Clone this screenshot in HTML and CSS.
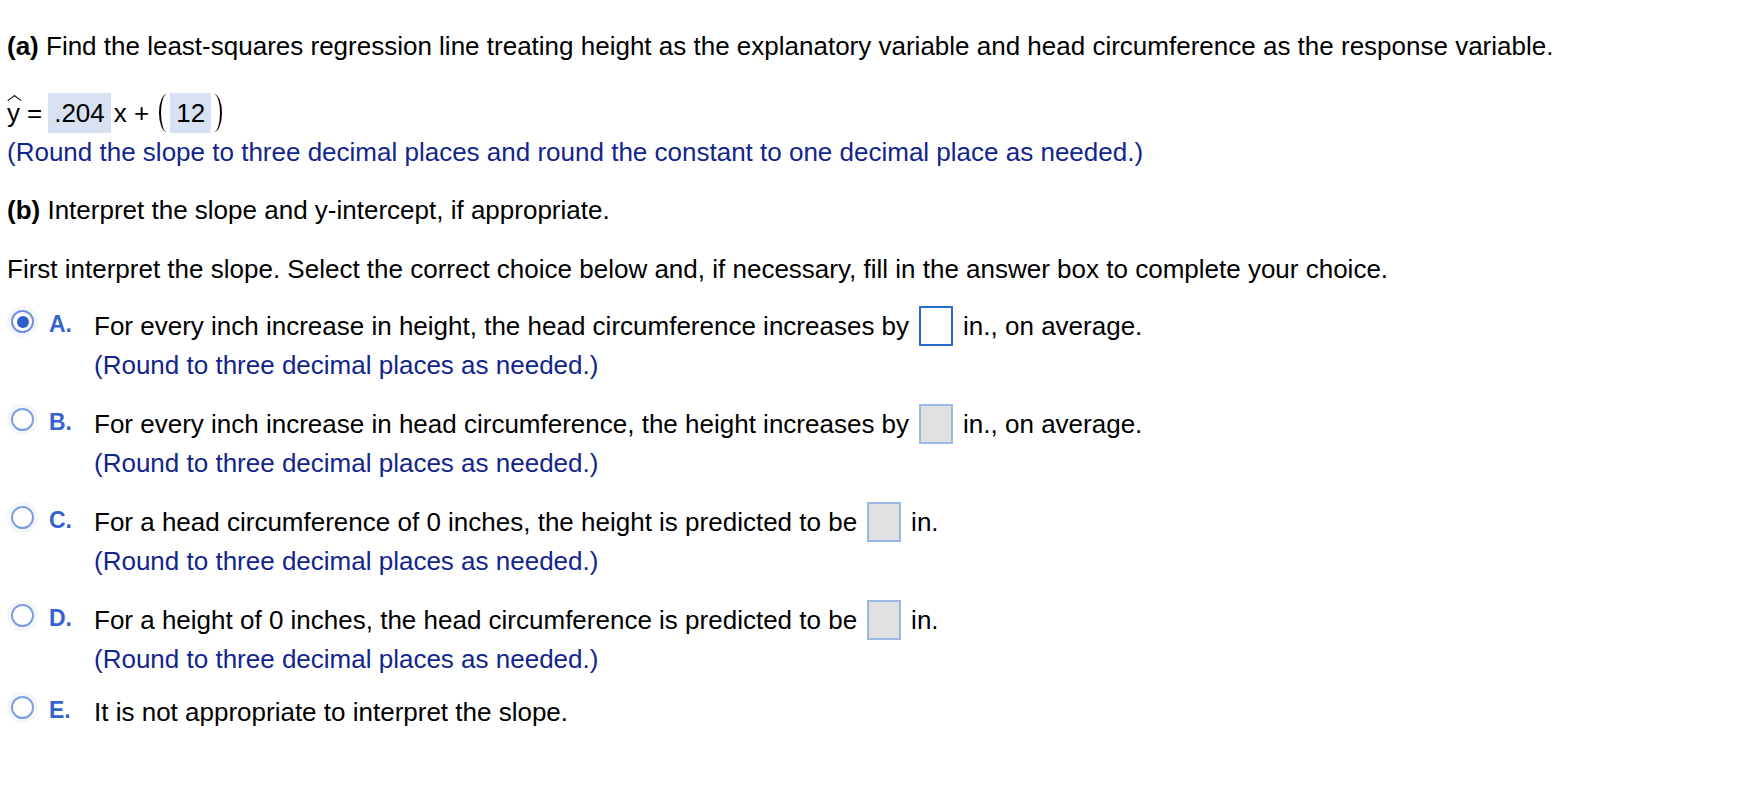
FILE: index.html
```html
<!DOCTYPE html>
<html lang="en">
<head>
<meta charset="utf-8">
<title>Regression question</title>
<link rel="stylesheet" href="styles.css">
</head>
<body>
<div class="page">
  <p class="q"><b>(a)</b> Find the least-squares regression line treating height as the explanatory variable and head circumference as the response variable.</p>
  <div class="eq">
    <span class="yhat">y<span class="hat"></span></span>
    <span class="eqsign">=</span>
    <span class="ans">.204</span>
    <span class="xplus">x +</span>
    <span class="paren paren-l"></span>
    <span class="ans">12</span>
    <span class="paren paren-r"></span>
  </div>
  <p class="note">(Round the slope to three decimal places and round the constant to one decimal place as needed.)</p>
  <p class="q part-b"><b>(b)</b> Interpret the slope and y-intercept, if appropriate.</p>
  <p class="q first">First interpret the slope. Select the correct choice below and, if necessary, fill in the answer box to complete your choice.</p>

  <div class="choices">
    <div class="choice">
      <span class="radio checked"></span>
      <span class="letter">A.</span>
      <div class="body">
        <div class="line"><span>For every inch increase in height, the head circumference increases by</span><span class="box active"></span><span>in., on average.</span></div>
        <div class="note">(Round to three decimal places as needed.)</div>
      </div>
    </div>
    <div class="choice">
      <span class="radio"></span>
      <span class="letter">B.</span>
      <div class="body">
        <div class="line"><span>For every inch increase in head circumference, the height increases by</span><span class="box"></span><span>in., on average.</span></div>
        <div class="note">(Round to three decimal places as needed.)</div>
      </div>
    </div>
    <div class="choice">
      <span class="radio"></span>
      <span class="letter">C.</span>
      <div class="body">
        <div class="line"><span>For a head circumference of 0 inches, the height is predicted to be</span><span class="box"></span><span>in.</span></div>
        <div class="note">(Round to three decimal places as needed.)</div>
      </div>
    </div>
    <div class="choice">
      <span class="radio"></span>
      <span class="letter">D.</span>
      <div class="body">
        <div class="line"><span>For a height of 0 inches, the head circumference is predicted to be</span><span class="box"></span><span>in.</span></div>
        <div class="note">(Round to three decimal places as needed.)</div>
      </div>
    </div>
    <div class="choice choice-e">
      <span class="radio"></span>
      <span class="letter">E.</span>
      <div class="body">
        <div class="line"><span>It is not appropriate to interpret the slope.</span></div>
      </div>
    </div>
  </div>
</div>
</body>
</html>
```
FILE: styles.css
```css
html, body {
  margin: 0;
  padding: 0;
  background: #ffffff;
}

body {
  font-family: "Liberation Sans", Arial, Helvetica, sans-serif;
  font-size: 26px;
  color: #000000;
}

.page {
  padding: 27px 0 0 7px;
}

p {
  margin: 0;
}

.q {
  line-height: 38px;
}

.q b {
  font-weight: bold;
}

.note {
  line-height: 38px;
  color: #12258c;
}

.part-b {
  margin-top: 20px;
}

.first {
  margin-top: 21px;
}

/* equation row */
.eq {
  margin-top: 28px;
  height: 40px;
  display: flex;
  align-items: center;
}

.yhat {
  position: relative;
  display: inline-block;
}

.hat {
  position: absolute;
  left: 3px;
  top: -2px;
  width: 8px;
  height: 8px;
  border-left: 1.6px solid #000;
  border-top: 1.6px solid #000;
  transform: rotate(45deg) skew(-8deg, -8deg);
}

.eqsign {
  margin-left: 7px;
  margin-right: 6px;
}

.ans {
  background: #d7e1f1;
  height: 40px;
  line-height: 40px;
  padding: 0 6px;
  display: inline-block;
}

.xplus {
  margin-left: 3px;
  margin-right: 10px;
}

.paren {
  display: inline-block;
  width: 8px;
  height: 38px;
  box-sizing: border-box;
}

.paren-l {
  border-left: 2px solid #000;
  border-radius: 8px 0 0 8px / 19px 0 0 19px;
  margin-right: 3px;
}

.paren-r {
  border-right: 2px solid #000;
  border-radius: 0 8px 8px 0 / 0 19px 19px 0;
  margin-left: 3px;
}

/* choices */
.choices {
  margin-top: 18px;
  display: flex;
  flex-direction: column;
  gap: 20px;
}

.choice {
  display: grid;
  grid-template-columns: 42px 45px 1fr;
  align-items: start;
}

.choice-e {
  margin-top: -6px;
}

.radio {
  margin-top: 4px;
  margin-left: 4px;
  width: 23px;
  height: 23px;
  box-sizing: border-box;
  border: 2px solid #7f9ee2;
  border-radius: 50%;
  background: #ffffff;
  box-shadow: 0 0 0 4px #f5f6f9, 0 0 1px 1px rgba(127, 158, 226, 0.5);
  position: relative;
}

.radio.checked {
  border-color: #6f90de;
}

.radio.checked::after {
  content: "";
  position: absolute;
  left: 3.5px;
  top: 3.5px;
  width: 12px;
  height: 12px;
  border-radius: 50%;
  background: #2f5dcc;
}

.letter {
  margin-top: 7px;
  font-size: 23px;
  line-height: 22px;
  font-weight: bold;
  color: #3562cf;
}

.line {
  display: flex;
  align-items: center;
  gap: 10px;
  height: 40px;
  white-space: nowrap;
}

.box {
  width: 34px;
  height: 40px;
  box-sizing: border-box;
  border: 2px solid #9bb7e6;
  background: #e0e0e0;
}

.box.active {
  border-color: #2a6bd0;
  background: #ffffff;
}
```
